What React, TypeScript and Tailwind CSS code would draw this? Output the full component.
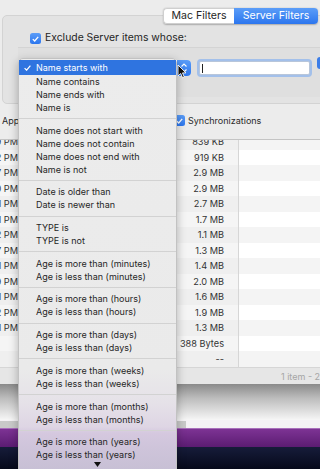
const MENU_GROUPS = [
  ['Name starts with', 'Name contains', 'Name ends with', 'Name is'],
  ['Name does not start with', 'Name does not contain', 'Name does not end with', 'Name is not'],
  ['Date is older than', 'Date is newer than'],
  ['TYPE is', 'TYPE is not'],
  ['Age is more than (minutes)', 'Age is less than (minutes)'],
  ['Age is more than (hours)', 'Age is less than (hours)'],
  ['Age is more than (days)', 'Age is less than (days)'],
  ['Age is more than (weeks)', 'Age is less than (weeks)'],
  ['Age is more than (months)', 'Age is less than (months)'],
  ['Age is more than (years)', 'Age is less than (years)'],
]

const ROWS = [
  { time: '11:29 PM', size: '839 KB' },
  { time: '10:32 PM', size: '919 KB' },
  { time: '9:47 PM', size: '2.9 MB' },
  { time: '8:50 PM', size: '2.9 MB' },
  { time: '3:41 PM', size: '2.7 MB' },
  { time: '2:11 PM', size: '1.7 MB' },
  { time: '1:22 PM', size: '1.1 MB' },
  { time: '4:37 PM', size: '1.3 MB' },
  { time: '5:11 PM', size: '1.4 MB' },
  { time: '6:19 PM', size: '2.0 MB' },
  { time: '7:31 PM', size: '1.6 MB' },
  { time: '3:12 PM', size: '1.9 MB' },
  { time: '2:11 PM', size: '1.3 MB' },
  { time: '', size: '388 Bytes' },
  { time: '', size: '--' },
]

export default function App() {
  return (
    <div className="relative h-[469px] w-[320px] overflow-hidden bg-[#ececec] font-['Inter',sans-serif] text-[#2a2a2a]">
      <FilterBox />
      <OptionsRow />
      <FileTable />
      <StatusBar />
      <Desktop />
      <ConditionMenu />
      <svg className="absolute left-[94px] top-[462px]" width="7" height="5" viewBox="0 0 7 5">
        <path d="M0 0 H7 L3.5 5 Z" fill="#111" />
      </svg>
      <Pointer />
    </div>
  )
}

function FilterBox() {
  return (
    <div className="h-[104px] pt-[8px]">
      <div className="relative z-10 flex justify-end pr-[2px]">
        <div className="flex h-[16px] rounded-[4px] text-[10.6px] leading-none shadow-[0_0.5px_1.5px_rgba(0,0,0,0.25)]">
          <span className="flex w-[71px] items-center justify-center rounded-l-[4px] border border-r-0 border-[#cfcfcf] bg-white text-[#262626]">
            Mac Filters
          </span>
          <span className="flex w-[84px] items-center justify-center rounded-r-[4px] bg-[linear-gradient(#5b9df8,#2c76ee)] text-white">
            Server Filters
          </span>
        </div>
      </div>
      <div className="-mr-[6px] -mt-[9px] ml-[2px] h-[89px] rounded-[5px] border border-[#d3d3d3] bg-[#e3e3e3] pt-[17px]">
        <div className="flex h-[11px] items-center pl-[27px]">
          <Checkbox />
          <span className="ml-[4px] text-[10.4px] leading-none text-[#1f1f1f]">Exclude Server items whose:</span>
        </div>
        <div className="ml-[15px] mt-[3px] flex h-[50px] items-start border-t border-[#d4d4d4] bg-[#dfdfdf] pt-[11px]">
          <div className="mt-[1px] flex h-[16px] w-[174px] justify-end rounded-[4px] bg-white">
            <div className="flex w-[14px] flex-col items-center justify-center gap-[2px] rounded-r-[4px] bg-[linear-gradient(#5b9df8,#2c76ee)]">
              <svg width="6" height="4" viewBox="0 0 6 4">
                <path d="M0.5 3.5 L3 1 L5.5 3.5" fill="none" stroke="white" strokeWidth="1.1" />
              </svg>
              <svg width="6" height="4" viewBox="0 0 6 4">
                <path d="M0.5 0.5 L3 3 L5.5 0.5" fill="none" stroke="white" strokeWidth="1.1" />
              </svg>
            </div>
          </div>
          <div className="ml-[6px] h-[18px] w-[115px] rounded-[4px] bg-[#a3c0ea] p-[2px]">
            <div className="flex h-full items-center rounded-[2px] border border-[#b8c6da] bg-white pl-[2px]">
              <span className="h-[9px] w-px bg-[#222]" />
            </div>
          </div>
          <div className="-mt-[2px] ml-[5px] h-[12px] w-[8px] rounded-[3px] bg-[#3b7de8]" />
        </div>
      </div>
    </div>
  )
}

function OptionsRow() {
  return (
    <div className="flex h-[36px] items-center border-b border-[#c4c4c4] pb-[2px] text-[9px] leading-none">
      <span className="w-[174px] pl-[2px]">Applications</span>
      <Checkbox />
      <span className="ml-[3px]">Synchronizations</span>
    </div>
  )
}

function FileTable() {
  return (
    <div className="h-[227px] overflow-hidden">
      <div className="-mt-[5.75px]">
        {ROWS.map((row, i) => (
          <div key={i} className="flex h-[15.5px] text-[9.2px] leading-none text-[#333]">
            <div className={`flex w-[238px] items-center ${i % 2 ? 'bg-[#f5f5f5]' : 'bg-[#efefef]'}`}>
              <div className="flex w-[18px] justify-end overflow-hidden">
                <span className="shrink-0 whitespace-nowrap">{row.time}</span>
              </div>
              <span className="ml-auto pr-[14px]">{row.size}</span>
            </div>
            <div className={`flex-1 border-l border-[#d6d6d6] ${i % 2 ? 'bg-white' : 'bg-[#f4f4f4]'}`} />
          </div>
        ))}
      </div>
    </div>
  )
}

function StatusBar() {
  return (
    <div className="flex h-[17px] items-center border-t border-[#d6d6d6] bg-[#e6e6e6] pl-[278px] text-[9px] leading-none text-[#a5a5a5]">
      <svg width="6" height="8" viewBox="0 0 6 8">
        <path d="M3 0 L6 3.5 H4.2 V8 H1.8 V3.5 H0 Z" fill="#a8a8a8" />
      </svg>
      <span className="ml-[3px] whitespace-nowrap">1 item - 25.4 GB available</span>
    </div>
  )
}

function Desktop() {
  return (
    <div className="flex h-[85px] flex-col">
      <div className="h-[36px] bg-[linear-gradient(#8a8a8a,#bdbdbd_40%,#f6f6f6)]" />
      <div className="flex h-[8px] bg-[#f4f1f5]">
        <div className="mt-[1px] w-[186px] bg-[#c9c9c9]" />
      </div>
      <div className="h-[19px] border-t border-[#a86cbb] bg-[linear-gradient(#7d3394,#5b1c72)]" />
      <div className="flex-1 bg-[linear-gradient(#161c3a,#06091a)]" />
    </div>
  )
}

function ConditionMenu() {
  return (
    <div className="absolute left-[18px] top-[58px] h-[430px] w-[159px] rounded-t-[5px] border border-[#c2c2c2] bg-[linear-gradient(180deg,#ececec_0px,#eaeaea_310px,#e5e1e8_345px,#ded5e4_368px,#d5c8df_374px,#cec4da_390px,#c6bfd4_415px)] pt-px text-[9px] leading-none text-[#262626] shadow-[0_3px_10px_rgba(0,0,0,0.28)]">
      {MENU_GROUPS.map((group, g) => (
        <div key={g}>
          {g > 0 && (
            <div className="flex h-[9.7px] items-center">
              <div className="h-px w-full bg-[#d2d2d2]" />
            </div>
          )}
          {group.map((label, i) =>
            g === 0 && i === 0 ? (
              <div key={label} className="relative flex h-[15px] items-center bg-[#2f74e0] pl-[17px] text-white">
                <svg className="absolute left-[5px]" width="7" height="6" viewBox="0 0 7 6">
                  <path d="M0.6 3.2 L2.6 5.2 L6.4 0.6" fill="none" stroke="white" strokeWidth="1.2" />
                </svg>
                {label}
              </div>
            ) : (
              <div key={label} className="flex h-[13px] items-center pl-[17px]">
                {label}
              </div>
            ),
          )}
        </div>
      ))}
    </div>
  )
}

function Checkbox() {
  return (
    <span className="flex h-[11px] w-[11px] shrink-0 items-center justify-center rounded-[2.5px] bg-[linear-gradient(#5b9df8,#2c76ee)]">
      <svg width="7" height="6" viewBox="0 0 7 6">
        <path d="M0.8 3.1 L2.7 5 L6.2 0.8" fill="none" stroke="white" strokeWidth="1.3" />
      </svg>
    </span>
  )
}

function Pointer() {
  return (
    <svg className="absolute left-[177px] top-[64px]" width="10" height="15" viewBox="0 0 10 15">
      <path
        d="M1 1 L1 12 L3.7 9.5 L5.6 13.8 L7.3 13 L5.5 8.9 L9 8.9 Z"
        fill="#111"
        stroke="white"
        strokeWidth="0.9"
        strokeLinejoin="round"
      />
    </svg>
  )
}
